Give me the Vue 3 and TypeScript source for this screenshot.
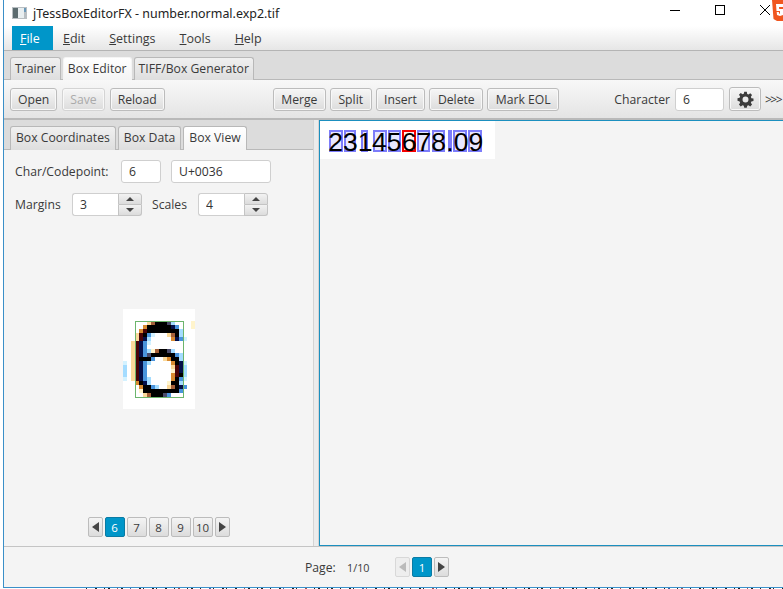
<script setup lang="ts">
import { ref } from 'vue'

const menus = [
  { key: 'F', rest: 'ile' },
  { key: 'E', rest: 'dit' },
  { key: 'S', rest: 'ettings' },
  { key: 'T', rest: 'ools' },
  { key: 'H', rest: 'elp' }
]
const mainTabs = ['Trainer', 'Box Editor', 'TIFF/Box Generator']
const subTabs = ['Box Coordinates', 'Box Data', 'Box View']
const editButtons = ['Merge', 'Split', 'Insert', 'Delete', 'Mark EOL']
const pages = ['6', '7', '8', '9', '10']

const activeTab = ref('Box Editor')
const activeSub = ref('Box View')

// glyph boxes on the scanned image, tx is the middle of the letter
const glyphs = [
  { ch: '2', x: 9, w: 14, tx: 15.5 },
  { ch: '3', x: 24, w: 12, tx: 30.3 },
  { ch: '1', x: 41, w: 7, tx: 45 },
  { ch: '4', x: 53, w: 14, tx: 59.4 },
  { ch: '5', x: 68, w: 13, tx: 74.2 },
  { ch: '6', x: 82, w: 14, tx: 89 },
  { ch: '7', x: 97, w: 13, tx: 103.8 },
  { ch: '8', x: 112, w: 13, tx: 118.6 },
  { ch: '.', x: 128, w: 4, tx: 129.9 },
  { ch: '0', x: 133, w: 14, tx: 141.1 },
  { ch: '9', x: 148, w: 14, tx: 155.9 }
]
const selected = '6'

const palette: Record<string, string> = {
  k: '#000000',
  n: '#04104a',
  b: '#4a94dc',
  l: '#a4dcff',
  c: '#d4f2ff',
  t: '#fbd99a',
  o: '#d88a30',
  r: '#4a0408',
  m: '#a5603a',
  y: '#fff4cc',
  g: '#4a4a6a'
}

// the zoomed "6", one letter per image pixel
const bitmap = [
  '..................',
  '..................',
  '..................',
  '......tmkkkgl....y',
  '.....okkkkkknb...y',
  '....orkkkkkkkkl...',
  '...trkbc...tmkl...',
  '...trnl.....onbc..',
  '..trnbc...........',
  '..trnb............',
  '..trnblymkkgl.....',
  '..trnbgkkkkkkbl...',
  '..trkkkb..tokkl...',
  'c.trnbl.....oknc..',
  'l.trnb......trnl..',
  'l.trnb......yrnl..',
  'l.trnb......orkl..',
  'c.trnbl.....okbc..',
  '...oknl....ykkl...',
  '....okkbl..tmknb..',
  '....ykkkkkkkkkb...',
  '.....tmkkkgb......',
  '..................',
  '..................',
  '..................'
]

const cells = bitmap.flatMap((row, y) =>
  row.split('').flatMap((c, x) => (c === '.' ? [] : [{ x, y, fill: palette[c] }]))
)

// bits of the window behind this one, showing under the bottom edge
const behind = Array.from({ length: 100 }, (_, i) => ({
  x: 86 + i * 7 + ((i * 7) % 5),
  w: 1 + (i % 2),
  fill: i % 9 === 4 ? '#a05050' : i % 11 === 6 ? '#4060a0' : '#222222'
}))
</script>

<template>
  <div class="window">
    <svg class="html5" viewBox="0 0 11 21">
      <path d="M0 0h11v21H5L1.500 19z" fill="#f0561f" />
      <path d="M4 4h7v3H7l.2 2H11v6l-3 1-3-1-.3-3h2.200l.1 1.500 1 .3V11H4.500z" fill="#fff" />
    </svg>

    <div class="frame">
      <header class="titlebar">
        <svg class="app-icon" viewBox="0 0 15 12">
          <rect width="15" height="12" fill="#b8bec2" />
          <rect x="1" y="1" width="5" height="10" fill="#5c6c70" />
          <rect x="6" y="1" width="6" height="10" fill="#e8eef0" />
          <rect x="12" y="1" width="2" height="4" fill="#6a98b8" />
        </svg>
        <span class="title">jTessBoxEditorFX - number.normal.exp2.tif</span>
        <div class="win-buttons">
          <svg viewBox="0 0 10 10"><path d="M0 5.500h10" stroke="#000" fill="none" /></svg>
          <svg viewBox="0 0 10 10"><rect x="0.500" y="0.500" width="9" height="9" stroke="#000" fill="none" /></svg>
          <svg viewBox="0 0 10 10"><path d="M0 0l10 10M10 0L0 10" stroke="#000" fill="none" /></svg>
        </div>
      </header>

      <nav class="menubar">
        <div v-for="(m, i) in menus" :key="m.key" class="menu" :class="{ open: i === 0 }">
          <u>{{ m.key }}</u>{{ m.rest }}
        </div>
      </nav>

      <div class="tabstrip main">
        <div v-for="t in mainTabs" :key="t" class="tab" :class="{ active: t === activeTab }">{{ t }}</div>
      </div>

      <div class="toolbar">
        <div class="group file">
          <button class="btn">Open</button>
          <button class="btn disabled">Save</button>
          <button class="btn">Reload</button>
        </div>
        <div class="group edit">
          <button v-for="b in editButtons" :key="b" class="btn">{{ b }}</button>
        </div>
        <div class="char">
          <label>Character</label>
          <input class="field char-input" value="6" />
          <button class="btn gear">
            <svg viewBox="0 0 20 20">
              <path
                fill="#3c3c3c"
                fill-rule="evenodd"
                d="M8.500 1h3l.5 2.500 1.500.6 2.100-1.400 2.100 2.100-1.400 2.100.6 1.500 2.500.5v3l-2.500.5-.6 1.500 1.400 2.100-2.100 2.100-2.100-1.400-1.500.6-.5 2.500h-3l-.5-2.500-1.500-.6-2.100 1.400-2.100-2.100 1.400-2.100-.6-1.500L.600 11.500v-3l2.500-.5.6-1.500-1.400-2.100 2.100-2.100 2.100 1.400 1.500-.6zM10 6.500a3.500 3.500 0 1 0 0 7 3.500 3.500 0 0 0 0-7z"
              />
            </svg>
          </button>
          <span class="more">&gt;&gt;&gt;</span>
        </div>
      </div>

      <div class="split">
        <section class="left">
          <div class="tabstrip sub">
            <div v-for="t in subTabs" :key="t" class="tab" :class="{ active: t === activeSub }">{{ t }}</div>
          </div>
          <div class="form-row first">
            <label>Char/Codepoint:</label>
            <input class="field small" value="6" />
            <input class="field code" value="U+0036" />
          </div>
          <div class="form-row">
            <label class="margins">Margins</label>
            <div class="spinner">
              <input class="field" value="3" />
              <div class="spin-btns"><i class="up"></i><i class="down"></i></div>
            </div>
            <label class="scales">Scales</label>
            <div class="spinner">
              <input class="field" value="4" />
              <div class="spin-btns"><i class="up"></i><i class="down"></i></div>
            </div>
          </div>

          <div class="preview">
            <svg class="zoomed" viewBox="0 0 18 25" shape-rendering="crispEdges">
              <rect width="18" height="25" fill="#fff" />
              <rect v-for="c in cells" :key="c.x + '-' + c.y" :x="c.x" :y="c.y" width="1" height="1" :fill="c.fill" />
              <rect x="3" y="3" width="12" height="19" fill="none" stroke="#6cb56c" stroke-width="0.25" />
            </svg>
          </div>

          <div class="pager">
            <button class="pg arrow"><i class="tri left-tri"></i></button>
            <button v-for="(p, i) in pages" :key="p" class="pg" :class="{ current: i === 0 }">{{ p }}</button>
            <button class="pg arrow"><i class="tri right-tri"></i></button>
          </div>
        </section>

        <div class="divider"></div>

        <section class="right">
          <svg class="scan" viewBox="0 0 175 38">
            <rect width="175" height="38" fill="#fff" />
            <g v-for="g in glyphs" :key="g.ch">
              <rect
                :x="g.x + 1"
                y="10"
                :width="g.w - 2"
                height="20"
                :fill="g.ch === selected ? '#fff0f0' : '#e8e8ff'"
                :stroke="g.ch === selected ? '#f40000' : '#7c7cfa'"
                stroke-width="2"
              />
              <text :x="g.tx" y="29.500" class="scan-text" text-anchor="middle">{{ g.ch }}</text>
            </g>
          </svg>
        </section>
      </div>

      <footer class="statusbar">
        <span class="page-label">Page:</span>
        <span class="page-count">1/10</span>
        <div class="pager">
          <button class="pg arrow off"><i class="tri left-tri"></i></button>
          <button class="pg current">1</button>
          <button class="pg arrow"><i class="tri right-tri"></i></button>
        </div>
      </footer>
    </div>

    <svg class="behind" width="783" height="1">
      <rect v-for="(b, i) in behind" :key="i" :x="b.x" y="0" :width="b.w" height="1" :fill="b.fill" />
    </svg>
  </div>
</template>

<style>
html,
body {
  margin: 0;
  background: #fff;
}
</style>

<style scoped>
.window {
  position: relative;
  width: 783px;
  height: 589px;
  overflow: hidden;
  background: #fff;
  font-family: 'Open Sans', 'Noto Sans', sans-serif;
  font-size: 12.200px;
  color: #333;
}
.html5 {
  position: absolute;
  right: 0;
  top: 0;
  width: 11px;
  height: 21px;
}
.behind {
  display: block;
}
.frame {
  box-sizing: border-box;
  width: 780px;
  height: 588px;
  margin-left: 3px;
  border-left: 1px solid #3a8fc8;
  border-bottom: 1px solid #3a8fc8;
  display: flex;
  flex-direction: column;
}
.titlebar {
  height: 26px;
  flex: none;
  display: flex;
  align-items: center;
  padding-left: 8px;
  background: #fff;
}
.app-icon {
  width: 15px;
  height: 12px;
}
.title {
  margin-left: 6px;
  font-family: 'Noto Sans', sans-serif;
  font-size: 12.450px;
  color: #222;
  white-space: nowrap;
}
.win-buttons {
  margin-left: auto;
  display: flex;
  gap: 35px;
  margin-right: 13px;
}
.win-buttons svg {
  width: 10px;
  height: 10px;
  margin-top: -6px;
}
.menubar {
  height: 25px;
  flex: none;
  box-sizing: border-box;
  display: flex;
  padding-left: 8px;
  background: linear-gradient(#fff, #e6e6e6);
  border-bottom: 1px solid #b4b4b4;
}
.menu {
  padding: 0 12px;
  line-height: 25px;
  font-size: 12.500px;
  color: #3a3a3a;
}
.menu.open {
  box-sizing: border-box;
  width: 41px;
  padding: 0 8px;
  margin-right: -2px;
  background: #0096c9;
  color: #fff;
}
.tabstrip {
  display: flex;
  align-items: flex-end;
  gap: 2px;
  background: #dcdcdc;
  border-bottom: 1px solid #b9b9b9;
  flex: none;
}
.tabstrip.main {
  height: 29px;
  box-sizing: border-box;
  padding-left: 6px;
}
.tab {
  box-sizing: border-box;
  height: 23px;
  padding: 0 5px;
  line-height: 21px;
  margin-bottom: -1px;
  color: #3a3a3a;
  border: 1px solid #b8b8b8;
  border-bottom: none;
  border-radius: 3px 3px 0 0;
  background: linear-gradient(#f0f0f0, #dedede);
  white-space: nowrap;
}
.main .tab {
  padding: 0 4px;
}
.tab.active {
  background: linear-gradient(#fff, #f4f4f4);
}
.main .tab.active {
  border-color: #f4f4f4;
}
.toolbar {
  height: 40px;
  flex: none;
  box-sizing: border-box;
  display: flex;
  align-items: center;
  padding: 0 0 0 6px;
  background: linear-gradient(#f8f8f8, #e4e4e4);
  border-bottom: 2px solid #b9b9b9;
}
.group {
  display: flex;
  gap: 4px;
}
.group.file {
  gap: 5px;
}
.group.file .btn {
  padding: 0 7px;
}
.group.edit {
  margin-left: 108px;
}
.btn {
  box-sizing: border-box;
  height: 23px;
  padding: 0 7.500px;
  font: inherit;
  color: #3a3a3a;
  border: 1px solid #bcbcbc;
  border-radius: 3px;
  background: linear-gradient(#f6f6f6, #dcdcdc);
  box-shadow: inset 0 0 0 1px #f8f8f8;
}
.btn.disabled {
  color: #aaa;
  border-color: #d4d4d4;
}
.char {
  display: flex;
  align-items: center;
  margin-left: auto;
  color: #3a3a3a;
}
.char label {
  margin-right: 5px;
}
.field {
  box-sizing: border-box;
  height: 23px;
  padding: 0 7px;
  font: inherit;
  color: #333;
  background: #fff;
  border: 1px solid #cfcfcf;
  border-radius: 3px;
  outline: none;
}
.char-input {
  width: 49px;
}
.gear {
  width: 32px;
  height: 24px;
  margin-left: 5px;
  padding: 0;
  display: flex;
  align-items: center;
  justify-content: center;
}
.gear svg {
  width: 17px;
  height: 17px;
}
.more {
  box-sizing: border-box;
  width: 22px;
  padding-left: 4px;
  font-size: 12px;
  letter-spacing: -1.500px;
  color: #3a3a3a;
}
.split {
  flex: 1;
  min-height: 0;
  display: flex;
  border-bottom: 1px solid #c4c4c4;
}
.left {
  width: 309px;
  flex: none;
  display: flex;
  flex-direction: column;
  background: #f4f4f4;
}
.tabstrip.sub {
  height: 30px;
  box-sizing: border-box;
  padding-left: 6px;
}
.sub .tab {
  height: 24px;
}
.form-row {
  display: flex;
  align-items: center;
  padding-left: 11px;
  margin-top: 10px;
  color: #3a3a3a;
}
.form-row label {
  flex: none;
}
.form-row.first label {
  width: 106px;
}
.form-row .small {
  width: 40px;
}
.form-row .code {
  width: 100px;
  margin-left: 10px;
}
.form-row label.margins {
  width: 57px;
}
.form-row label.scales {
  width: 46px;
  margin-left: 10px;
}
.spinner {
  display: flex;
  width: 70px;
  height: 23px;
}
.spinner .field {
  width: 46px;
  border-radius: 3px 0 0 3px;
  border-right: none;
}
.spin-btns {
  width: 24px;
  display: flex;
  flex-direction: column;
}
.spin-btns i {
  flex: 1;
  box-sizing: border-box;
  display: flex;
  align-items: center;
  justify-content: center;
  border: 1px solid #c4c4c4;
  background: linear-gradient(#f2f2f2, #dcdcdc);
}
.spin-btns i::after {
  content: '';
  border-left: 4px solid transparent;
  border-right: 4px solid transparent;
}
.spin-btns .up {
  border-radius: 0 3px 0 0;
}
.spin-btns .down {
  border-top: none;
  border-radius: 0 0 3px 0;
}
.spin-btns .up::after {
  border-bottom: 4px solid #444;
}
.spin-btns .down::after {
  border-top: 4px solid #444;
}
.preview {
  flex: 1;
  min-height: 0;
  display: flex;
  justify-content: center;
  align-items: flex-start;
  padding-top: 93px;
}
.zoomed {
  width: 72px;
  height: 100px;
  margin-left: 1px;
}
.left .pager {
  justify-content: center;
  margin-bottom: 9px;
}
.pager {
  display: flex;
  gap: 2px;
  align-items: center;
}
.pg {
  box-sizing: border-box;
  width: 20px;
  height: 20px;
  padding: 0;
  font: inherit;
  font-size: 11.500px;
  color: #3a3a3a;
  border: 1px solid #bcbcbc;
  border-radius: 2px;
  background: linear-gradient(#f4f4f4, #dcdcdc);
}
.pg.current {
  background: #0096c9;
  border-color: #0a7ba4;
  color: #fff;
}
.pg.arrow {
  width: 15px;
  display: flex;
  align-items: center;
  justify-content: center;
}
.pg.off {
  border-color: #d8d8d8;
  background: #eee;
}
.pg.off .tri {
  opacity: 0.3;
}
.tri {
  display: block;
  border-top: 5px solid transparent;
  border-bottom: 5px solid transparent;
}
.left-tri {
  border-right: 7px solid #444;
}
.right-tri {
  border-left: 7px solid #444;
}
.divider {
  width: 6px;
  flex: none;
  background: #ececec;
  border-left: 1px solid #d4d4d4;
  border-right: 1px solid #d4d4d4;
  box-sizing: border-box;
}
.right {
  flex: 1;
  min-width: 0;
  background: #f4f4f4;
  border: 1px solid #1b8fbf;
  border-right: none;
}
.scan {
  display: block;
  width: 175px;
  height: 38px;
}
.scan-text {
  font-family: 'Liberation Sans', Arial, sans-serif;
  font-size: 26.500px;
  fill: #000;
}
.statusbar {
  flex: none;
  height: 40px;
  display: flex;
  align-items: center;
  padding-left: 301px;
  background: #f4f4f4;
  color: #3a3a3a;
}
.page-label {
  width: 42px;
}
.page-count {
  width: 48px;
  font-size: 10.800px;
}
</style>
